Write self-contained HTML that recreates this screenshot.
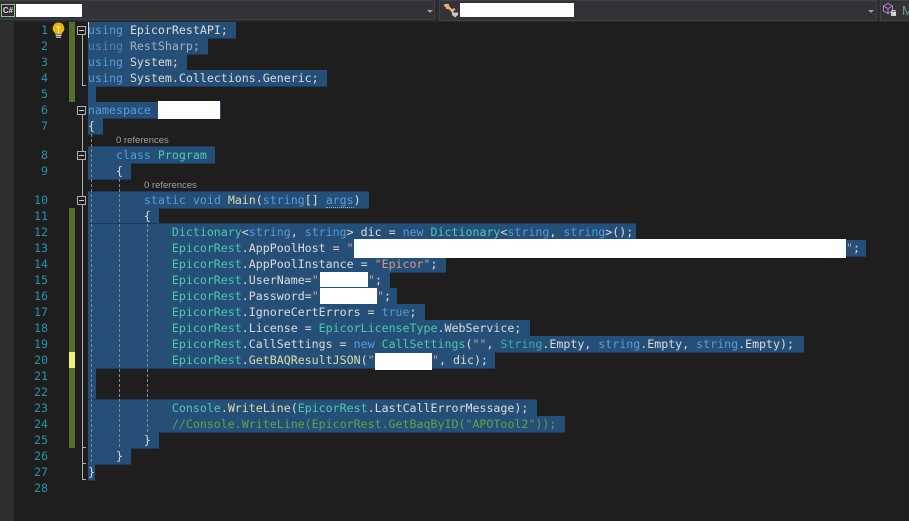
<!DOCTYPE html>
<html>
<head>
<meta charset="utf-8">
<style>
html,body{margin:0;padding:0;background:#1e1e1e;}
#p{position:relative;width:909px;height:521px;overflow:hidden;background:#1e1e1e;font-family:"DejaVu Sans Mono","Liberation Mono",monospace;font-size:11.62px;color:#dcdcdc;}
#p div{position:absolute;}
.l{left:88px;height:16px;line-height:16px;white-space:pre;}
.b{left:88px;height:16px;background:#264f78;box-shadow:0 1px 0 #1d3a58;}
.tp{box-shadow:0 1px 0 #1d3a58,0 -1px 0 #1d3a58;}
.n{left:20px;width:28px;height:16px;line-height:16px;text-align:right;color:#2b91af;}
.k{color:#569cd6}.t{color:#4ec9b0}.m{color:#dcdcaa}.s{color:#d69d85}.c{color:#57a64a}
.w{background:#fff}
.f{left:77px;width:7px;height:7px;border:1px solid #b0b0b0;background:#1e1e1e;}
.f:after{content:"";position:absolute;left:1px;top:3px;width:5px;height:1px;background:#d0d0d0;}
.v{background:#b0b0b0;}
.r{font-family:"Liberation Sans",sans-serif;font-size:9.5px;color:#a0a0a0;line-height:12px;white-space:pre;}
.g{width:1px;background:repeating-linear-gradient(to bottom,#808b96 0,#808b96 3px,transparent 3px,transparent 5px);}
</style>
</head>
<body>
<div id="p">
<!-- top bar -->
<div style="left:0;top:0;width:909px;height:20px;background:#2d2d30;"></div>
<div style="left:0;top:20px;width:909px;height:2px;background:#2a2a2c;"></div>
<div style="left:-2px;top:0;width:437px;height:20px;box-sizing:border-box;border:1px solid #3f3f46;background:#333337;"></div>
<div style="left:439px;top:0;width:438px;height:21px;box-sizing:border-box;border:1px solid #3f3f46;background:#333337;"></div>
<div style="left:880px;top:0;width:32px;height:21px;box-sizing:border-box;border:1px solid #3f3f46;background:#333337;"></div>
<div style="left:1px;top:4px;width:12px;height:11px;border:1px solid #8fc08f;background:#2d2d30;color:#e0e0e0;font:bold 8px/11px 'Liberation Sans',sans-serif;text-align:center;">C#</div>
<div class="w" style="left:16px;top:4px;width:66px;height:13px;"></div>
<div class="w" style="left:460px;top:3px;width:114px;height:14px;"></div>
<div style="left:427px;top:10px;width:0;height:0;border:3px solid transparent;border-top:3px solid #a0a0a0;"></div>
<div style="left:868px;top:10px;width:0;height:0;border:3px solid transparent;border-top:3px solid #a0a0a0;"></div>
<svg style="position:absolute;left:441px;top:2px" width="18" height="16" viewBox="0 0 18 16"><path d="M3 3.500L8 3M5 2L6 6L9 5M8 6L11 8.500L14 7M11 8.500L11.500 10.500" fill="none" stroke="#f0b676" stroke-width="2.200"/><path d="M11 10.500h6v2.500l-3 2.500l-3-2.500z" fill="#c8c8c8"/></svg>
<svg style="position:absolute;left:882px;top:2px" width="20" height="16" viewBox="0 0 20 16"><path d="M6 1.500l4.500 2.500v5l-4.500 2.500l-4.500-2.500v-5zM1.500 4l4.500 2.500l4.500-2.500M6 6.500v5" fill="none" stroke="#b180d7" stroke-width="1"/><rect x="9" y="10" width="5" height="4" fill="#d0d0d0"/><path d="M10 10V8.500h3V10" fill="none" stroke="#d0d0d0"/></svg>
<div style="left:902px;top:3px;font:13px/16px 'Liberation Sans',sans-serif;color:#6a9a9a;">M</div>

<!-- left strip -->
<div style="left:0;top:22px;width:14px;height:499px;background:#2f2f31;"></div>

<!-- change margin -->
<div style="left:69px;top:22px;width:6px;height:80px;background:#54702b;"></div>
<div style="left:69px;top:208px;width:6px;height:240px;background:#54702b;"></div>
<div style="left:69px;top:352px;width:6px;height:16px;background:#efef7f;"></div>

<!-- line numbers -->
<div class="n" style="top:22px">1</div><div class="n" style="top:38px">2</div><div class="n" style="top:54px">3</div><div class="n" style="top:70px">4</div><div class="n" style="top:86px">5</div><div class="n" style="top:102px">6</div><div class="n" style="top:118px">7</div><div class="n" style="top:147px">8</div><div class="n" style="top:163px">9</div><div class="n" style="top:192px">10</div><div class="n" style="top:208px">11</div><div class="n" style="top:224px">12</div><div class="n" style="top:240px">13</div><div class="n" style="top:256px">14</div><div class="n" style="top:272px">15</div><div class="n" style="top:288px">16</div><div class="n" style="top:304px">17</div><div class="n" style="top:320px">18</div><div class="n" style="top:336px">19</div><div class="n" style="top:352px">20</div><div class="n" style="top:368px">21</div><div class="n" style="top:384px">22</div><div class="n" style="top:400px">23</div><div class="n" style="top:416px">24</div><div class="n" style="top:432px">25</div><div class="n" style="top:448px">26</div><div class="n" style="top:464px">27</div><div class="n" style="top:480px">28</div>

<!-- lightbulb -->
<svg style="position:absolute;left:52px;top:22px" width="13" height="17" viewBox="0 0 13 17"><path d="M6.500 0.500a5.800 5.800 0 0 1 3.500 10.400v1.100h-7v-1.100a5.800 5.800 0 0 1 3.500-10.400z" fill="#e8b50c"/><path d="M4.500 5h4M6.500 5v6" stroke="#f7e9a8" stroke-width="1.200" fill="none"/><rect x="3.500" y="12.500" width="6" height="1.500" fill="#d0d0d0"/><rect x="4" y="14.500" width="5" height="1.500" fill="#b0b0b0"/></svg>

<!-- selections -->
<div class="b" style="top:22px;width:148px"></div>
<div class="b" style="top:38px;width:120px"></div>
<div class="b" style="top:54px;width:99px"></div>
<div class="b" style="top:70px;width:239px"></div>
<div class="b" style="top:86px;width:8px"></div>
<div class="b" style="top:102px;width:133px"></div>
<div class="b" style="top:118px;width:15px"></div>
<div class="b tp" style="top:147px;width:127px"></div>
<div class="b" style="top:163px;width:43px"></div>
<div class="b tp" style="top:192px;width:281px"></div>
<div class="b" style="top:208px;width:71px"></div>
<div class="b tp" style="top:224px;width:548px"></div>
<div class="b" style="top:240px;width:778px"></div>
<div class="b" style="top:256px;width:358px"></div>
<div class="b" style="top:272px;width:302px"></div>
<div class="b" style="top:288px;width:309px"></div>
<div class="b" style="top:304px;width:337px"></div>
<div class="b" style="top:320px;width:442px"></div>
<div class="b" style="top:336px;width:716px"></div>
<div class="b" style="top:352px;width:407px"></div>
<div class="b" style="top:368px;width:8px"></div>
<div class="b" style="top:384px;width:8px"></div>
<div class="b tp" style="top:400px;width:449px"></div>
<div class="b" style="top:416px;width:477px"></div>
<div class="b" style="top:432px;width:71px"></div>
<div class="b" style="top:448px;width:43px"></div>
<div class="b" style="top:464px;width:7px"></div>

<!-- caret -->
<div style="left:88px;top:22px;width:1px;height:16px;background:#dcdcdc;"></div>

<!-- outlining -->
<div class="v" style="left:82px;top:35px;width:1px;height:50px"></div>
<div class="v" style="left:82px;top:85px;width:4px;height:1px"></div>
<div class="v" style="left:82px;top:115px;width:1px;height:365px"></div>
<div class="v" style="left:82px;top:447px;width:4px;height:1px"></div>
<div class="v" style="left:82px;top:463px;width:4px;height:1px"></div>
<div class="v" style="left:82px;top:479px;width:4px;height:1px"></div>
<div class="f" style="top:26px"></div>
<div class="f" style="top:106px"></div>
<div class="f" style="top:151px"></div>
<div class="f" style="top:196px"></div>

<!-- indent guides -->
<div class="g" style="left:91px;top:134px;height:330px"></div>
<div class="g" style="left:119px;top:179px;height:269px"></div>
<div class="g" style="left:147px;top:224px;height:208px"></div>

<!-- code -->
<div class="l" style="top:22px"><span class="k">using</span> EpicorRestAPI;</div>
<div class="l" style="top:38px;color:#9fb2c4"><span style="color:#4f86b5">using</span> RestSharp;</div>
<div class="l" style="top:54px"><span class="k">using</span> System;</div>
<div class="l" style="top:70px"><span class="k">using</span> System.Collections.Generic;</div>
<div class="l" style="top:102px"><span class="k">namespace</span></div>
<div class="l" style="top:118px">{</div>
<div class="r" style="left:116px;top:135px">0 references</div>
<div class="l" style="top:147px">    <span class="k">class</span> <span class="t">Program</span></div>
<div class="l" style="top:163px">    {</div>
<div class="r" style="left:144px;top:180px">0 references</div>
<div class="l" style="top:192px">        <span class="k">static</span> <span class="k">void</span> <span class="m">Main</span>(<span class="k">string</span>[] <span class="k" style="border-bottom:1px dotted #8ab">args</span>)</div>
<div class="l" style="top:208px">        {</div>
<div class="l" style="top:224px">            <span class="t">Dictionary</span>&lt;<span class="k">string</span>, <span class="k">string</span>&gt; dic = <span class="k">new</span> <span class="t">Dictionary</span>&lt;<span class="k">string</span>, <span class="k">string</span>&gt;();</div>
<div class="l" style="top:240px">            <span class="t">EpicorRest</span>.AppPoolHost = <span class="s">"</span></div>
<div class="l" style="top:240px;left:846px"><span class="s">"</span>;</div>
<div class="l" style="top:256px">            <span class="t">EpicorRest</span>.AppPoolInstance = <span class="s">"Epicor"</span>;</div>
<div class="l" style="top:272px">            <span class="t">EpicorRest</span>.UserName=<span class="s">"</span></div>
<div class="l" style="top:272px;left:368px"><span class="s">"</span>;</div>
<div class="l" style="top:288px">            <span class="t">EpicorRest</span>.Password=<span class="s">"</span></div>
<div class="l" style="top:288px;left:377px"><span class="s">"</span>;</div>
<div class="l" style="top:304px">            <span class="t">EpicorRest</span>.IgnoreCertErrors = <span class="k">true</span>;</div>
<div class="l" style="top:320px">            <span class="t">EpicorRest</span>.License = <span class="t">EpicorLicenseType</span>.WebService;</div>
<div class="l" style="top:336px">            <span class="t">EpicorRest</span>.CallSettings = <span class="k">new</span> <span class="t">CallSettings</span>(<span class="s">""</span>, <span class="t" style="opacity:.75">String</span>.Empty, <span class="k">string</span>.Empty, <span class="k">string</span>.Empty);</div>
<div class="l" style="top:352px">            <span class="t">EpicorRest</span>.<span class="m">GetBAQResultJSON</span>(<span class="s">"</span></div>
<div class="l" style="top:352px;left:432px"><span class="s">"</span>, dic);</div>
<div class="l" style="top:400px">            <span class="t">Console</span>.<span class="m">WriteLine</span>(<span class="t">EpicorRest</span>.LastCallErrorMessage);</div>
<div class="l" style="top:416px">            <span class="c">//Console.WriteLine(EpicorRest.GetBaqByID("APOTool2"));</span></div>
<div class="l" style="top:432px">        }</div>
<div class="l" style="top:448px">    }</div>
<div class="l" style="top:464px">}</div>

<!-- redactions -->
<div class="w" style="left:158px;top:101px;width:62px;height:18px"></div>
<div class="w" style="left:354px;top:239px;width:492px;height:19px"></div>
<div class="w" style="left:320px;top:272px;width:48px;height:15px"></div>
<div class="w" style="left:320px;top:288px;width:57px;height:16px"></div>
<div class="w" style="left:375px;top:353px;width:57px;height:17px"></div>
</div>
</body>
</html>
